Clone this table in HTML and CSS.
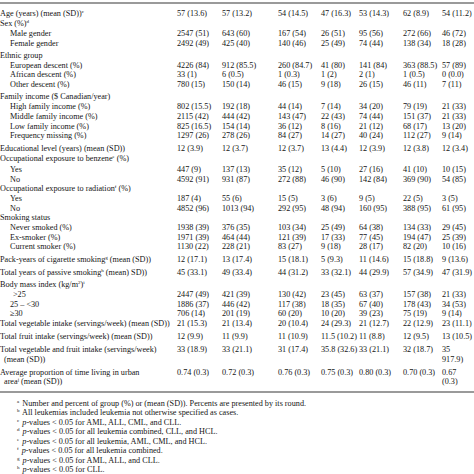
FILE: index.html
```html
<!DOCTYPE html>
<html>
<head>
<meta charset="utf-8">
<link rel="stylesheet" href="styles.css">
</head>
<body>
<div class="page">
<table class="tbl">
<colgroup>
<col class="c-label"><col class="c1"><col class="c2"><col class="c3"><col class="c4"><col class="c5"><col class="c6"><col class="c7">
</colgroup>
<tbody>
<tr class="first"><td class="lab">Age (years) (mean (SD))<sup>c</sup></td><td>57 (13.6)</td><td>57 (13.2)</td><td>54 (14.5)</td><td>47 (16.3)</td><td>53 (14.3)</td><td>62 (8.9)</td><td>54 (11.2)</td></tr>
<tr><td class="lab">Sex (%)<sup>d</sup></td><td></td><td></td><td></td><td></td><td></td><td></td><td></td></tr>
<tr class="g1"><td class="lab sub">Male gender</td><td>2547 (51)</td><td>643 (60)</td><td>167 (54)</td><td>26 (51)</td><td>95 (56)</td><td>272 (66)</td><td>46 (72)</td></tr>
<tr><td class="lab sub">Female gender</td><td>2492 (49)</td><td>425 (40)</td><td>140 (46)</td><td>25 (49)</td><td>74 (44)</td><td>138 (34)</td><td>18 (28)</td></tr>
<tr class="g2"><td class="lab">Ethnic group</td><td></td><td></td><td></td><td></td><td></td><td></td><td></td></tr>
<tr><td class="lab sub">European descent (%)</td><td>4226 (84)</td><td>912 (85.5)</td><td>260 (84.7)</td><td>41 (80)</td><td>141 (84)</td><td>363 (88.5)</td><td>57 (89)</td></tr>
<tr><td class="lab sub">African descent (%)</td><td>33 (1)</td><td>6 (0.5)</td><td>1 (0.3)</td><td>1 (2)</td><td>2 (1)</td><td>1 (0.5)</td><td>0 (0.0)</td></tr>
<tr><td class="lab sub">Other descent (%)</td><td>780 (15)</td><td>150 (14)</td><td>46 (15)</td><td>9 (18)</td><td>26 (15)</td><td>46 (11)</td><td>7 (11)</td></tr>
<tr class="g2"><td class="lab">Family income ($ Canadian/year)</td><td></td><td></td><td></td><td></td><td></td><td></td><td></td></tr>
<tr class="g1"><td class="lab sub">High family income (%)</td><td>802 (15.5)</td><td>192 (18)</td><td>44 (14)</td><td>7 (14)</td><td>34 (20)</td><td>79 (19)</td><td>21 (33)</td></tr>
<tr><td class="lab sub">Middle family income (%)</td><td>2115 (42)</td><td>444 (42)</td><td>143 (47)</td><td>22 (43)</td><td>74 (44)</td><td>151 (37)</td><td>21 (33)</td></tr>
<tr><td class="lab sub">Low family income (%)</td><td>825 (16.5)</td><td>154 (14)</td><td>36 (12)</td><td>8 (16)</td><td>21 (12)</td><td>68 (17)</td><td>13 (20)</td></tr>
<tr><td class="lab sub">Frequency missing (%)</td><td>1297 (26)</td><td>278 (26)</td><td>84 (27)</td><td>14 (27)</td><td>40 (24)</td><td>112 (27)</td><td>9 (14)</td></tr>
<tr class="g4"><td class="lab">Educational level (years) (mean (SD))</td><td>12 (3.9)</td><td>12 (3.7)</td><td>12 (3.7)</td><td>13 (4.4)</td><td>12 (3.9)</td><td>12 (3.8)</td><td>12 (3.4)</td></tr>
<tr><td class="lab">Occupational exposure to benzene<sup>e</sup> (%)</td><td></td><td></td><td></td><td></td><td></td><td></td><td></td></tr>
<tr class="g1"><td class="lab sub">Yes</td><td>447 (9)</td><td>137 (13)</td><td>35 (12)</td><td>5 (10)</td><td>27 (16)</td><td>41 (10)</td><td>10 (15)</td></tr>
<tr><td class="lab sub">No</td><td>4592 (91)</td><td>931 (87)</td><td>272 (88)</td><td>46 (90)</td><td>142 (84)</td><td>369 (90)</td><td>54 (85)</td></tr>
<tr><td class="lab">Occupational exposure to radiation<sup>f</sup> (%)</td><td></td><td></td><td></td><td></td><td></td><td></td><td></td></tr>
<tr><td class="lab sub">Yes</td><td>187 (4)</td><td>55 (6)</td><td>15 (5)</td><td>3 (6)</td><td>9 (5)</td><td>22 (5)</td><td>3 (5)</td></tr>
<tr><td class="lab sub">No</td><td>4852 (96)</td><td>1013 (94)</td><td>292 (95)</td><td>48 (94)</td><td>160 (95)</td><td>388 (95)</td><td>61 (95)</td></tr>
<tr><td class="lab">Smoking status</td><td></td><td></td><td></td><td></td><td></td><td></td><td></td></tr>
<tr><td class="lab sub">Never smoked (%)</td><td>1938 (39)</td><td>376 (35)</td><td>103 (34)</td><td>25 (49)</td><td>64 (38)</td><td>134 (33)</td><td>29 (45)</td></tr>
<tr><td class="lab sub">Ex-smoker (%)</td><td>1971 (39)</td><td>464 (44)</td><td>121 (39)</td><td>17 (33)</td><td>77 (45)</td><td>194 (47)</td><td>25 (39)</td></tr>
<tr><td class="lab sub">Current smoker (%)</td><td>1130 (22)</td><td>228 (21)</td><td>83 (27)</td><td>9 (18)</td><td>28 (17)</td><td>82 (20)</td><td>10 (16)</td></tr>
<tr class="g4"><td class="lab">Pack-years of cigarette smoking<sup>g</sup> (mean (SD))</td><td>12 (17.1)</td><td>13 (17.4)</td><td>15 (18.1)</td><td>5 (9.3)</td><td>11 (14.6)</td><td>15 (18.8)</td><td>9 (13.6)</td></tr>
<tr class="g4"><td class="lab">Total years of passive smoking<sup>h</sup> (mean) SD))</td><td>45 (33.1)</td><td>49 (33.4)</td><td>44 (31.2)</td><td>33 (32.1)</td><td>44 (29.9)</td><td>57 (34.9)</td><td>47 (31.9)</td></tr>
<tr class="g2"><td class="lab">Body mass index (kg/m<sup>2</sup>)<sup>i</sup></td><td></td><td></td><td></td><td></td><td></td><td></td><td></td></tr>
<tr><td class="lab sub2">&gt;25</td><td>2447 (49)</td><td>421 (39)</td><td>130 (42)</td><td>23 (45)</td><td>63 (37)</td><td>157 (38)</td><td>21 (33)</td></tr>
<tr><td class="lab sub">25 – &lt;30</td><td>1886 (37)</td><td>446 (42)</td><td>117 (38)</td><td>18 (35)</td><td>67 (40)</td><td>178 (43)</td><td>34 (53)</td></tr>
<tr><td class="lab sub">≥30</td><td>706 (14)</td><td>201 (19)</td><td>60 (20)</td><td>10 (20)</td><td>39 (23)</td><td>75 (19)</td><td>9 (14)</td></tr>
<tr><td class="lab">Total vegetable intake (servings/week) (mean (SD))</td><td>21 (15.3)</td><td>21 (13.4)</td><td>20 (10.4)</td><td>24 (29.3)</td><td>21 (12.7)</td><td>22 (12.9)</td><td>23 (11.1)</td></tr>
<tr class="g4"><td class="lab">Total fruit intake (servings/week) (mean (SD))</td><td>12 (9.9)</td><td>11 (9.9)</td><td>11 (10.9)</td><td>11.5 (10.2)</td><td>11 (8.8)</td><td>12 (9.5)</td><td>13 (10.5)</td></tr>
<tr class="g4"><td class="lab hang">Total vegetable and fruit intake (servings/week)<br>(mean (SD))</td><td>33 (18.9)</td><td>33 (21.1)</td><td>31 (17.4)</td><td>35.8 (32.6)</td><td>33 (21.1)</td><td>32 (18.7)</td><td>35<br>917.9)</td></tr>
<tr class="g4 last"><td class="lab hang">Average proportion of time living in urban<br>area<sup>j</sup> (mean (SD))</td><td>0.74 (0.3)</td><td>0.72 (0.3)</td><td>0.76 (0.3)</td><td>0.75 (0.3)</td><td>0.80 (0.3)</td><td>0.70 (0.3)</td><td>0.67<br>(0.3)</td></tr>
</tbody>
</table>
<div class="notes">
<p class="note"><sup>a</sup> Number and percent of group (%) or (mean (SD)). Percents are presented by its round.</p>
<p class="note"><sup>b</sup> All leukemias included leukemia not otherwise specified as cases.</p>
<p class="note"><sup>c</sup> <i>p</i>-values &lt; 0.05 for AML, ALL, CML, and CLL.</p>
<p class="note"><sup>d</sup> <i>p</i>-values &lt; 0.05 for all leukemia combined, CLL, and HCL.</p>
<p class="note"><sup>e</sup> <i>p</i>-values &lt; 0.05 for all leukemia, AML, CML, and HCL.</p>
<p class="note"><sup>f</sup> <i>p</i>-values &lt; 0.05 for all leukemia combined.</p>
<p class="note"><sup>g</sup> <i>p</i>-values &lt; 0.05 for AML, ALL, and CLL.</p>
<p class="note"><sup>h</sup> <i>p</i>-values &lt; 0.05 for CLL.</p>
</div>
</div>
</body>
</html>
```
FILE: styles.css
```css
html, body {
  margin: 0;
  padding: 0;
  background: #ffffff;
}
.page {
  width: 474px;
  font-family: "Liberation Serif", "Times New Roman", serif;
  font-size: 8.2px;
  color: #151515;
  padding-top: 2px;
}
.tbl {
  width: 474px;
  table-layout: fixed;
  border-collapse: collapse;
  border-top: 2px solid #9a9a9a;
  border-bottom: 2px solid #9a9a9a;
}
.c-label { width: 177px; }
.c1 { width: 45px; }
.c2 { width: 56px; }
.c3 { width: 43px; }
.c4 { width: 38px; }
.c5 { width: 44px; }
.c6 { width: 39px; }
.c7 { width: 32px; }
.tbl td {
  padding: 0;
  line-height: 9.7px;
  vertical-align: top;
  white-space: nowrap;
  overflow: visible;
}
.tbl tr.first td { padding-top: 5px; }
.tbl tr.g1 td { padding-top: 1px; }
.tbl tr.g2 td { padding-top: 2px; }
.tbl tr.g4 td { padding-top: 3.3px; }
.tbl tr.last td { padding-bottom: 3.5px; }
.lab { padding-left: 0; }
.tbl td.sub { padding-left: 10px; }
.tbl td.sub2 { padding-left: 13px; }
.tbl td.hang { padding-left: 4px; text-indent: -4px; }
sup {
  font-size: 5px;
  line-height: 0;
  vertical-align: 3px;
}
.notes {
  padding-top: 6px;
}
.note {
  margin: 0;
  padding-left: 17px;
  line-height: 9.5px;
  white-space: nowrap;
}
.note sup {
  margin-right: 1px;
}
```
